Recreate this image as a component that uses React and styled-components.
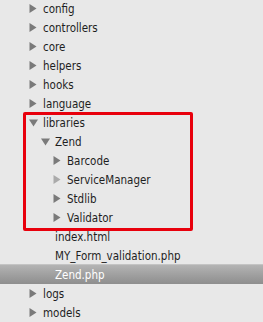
import React from 'react';
import styled, { createGlobalStyle } from 'styled-components';

const Global = createGlobalStyle`
  html, body {
    margin: 0;
    padding: 0;
    background: #e8e8e8;
  }
  body {
    font-family: 'DejaVu Sans Condensed', 'DejaVu Sans', sans-serif;
  }
`;

const Tree = styled.div`
  width: 263px;
  height: 322px;
  overflow: hidden;
  background: #e8e8e8;
`;

const List = styled.div`
  margin-top: -1px;
  display: flex;
  flex-direction: column;
`;

const Row = styled.div`
  height: 19px;
  display: flex;
  align-items: center;
  padding-left: ${(p) => 29 + p.level * 12}px;
  font-size: 11.5px;
  font-stretch: condensed;
  color: ${(p) => (p.selected ? '#fff' : '#1e1e1e')};
  background: ${(p) =>
    p.selected ? 'linear-gradient(#b4b4b4, #a2a2a2 45%, #8e8e8e)' : 'transparent'};
  border-top: 1px solid ${(p) => (p.selected ? '#c4c4c4' : 'transparent')};
  margin-top: -1px;
  white-space: nowrap;
`;

const Arrow = styled.span`
  width: 14px;
  height: 19px;
  flex: none;
  display: flex;
  align-items: center;
  & svg {
    display: block;
  }
`;

const Highlight = styled.div`
  position: absolute;
  left: 23px;
  top: 113px;
  width: 170px;
  height: 119px;
  box-sizing: border-box;
  border: 3px solid #e8000c;
  border-radius: 2px;
  pointer-events: none;
`;

const Wrap = styled.div`
  position: relative;
`;

function Caret({ open, dim }) {
  const fill = dim ? '#aaaaaa' : '#7a7a7a';
  return open ? (
    <svg width="9" height="8" viewBox="0 0 9 8">
      <polygon points="0,0.5 9,0.5 4.5,7.5" fill={fill} />
    </svg>
  ) : (
    <svg width="8" height="9" viewBox="0 0 8 9">
      <polygon points="0.5,0 7.5,4.5 0.5,9" fill={fill} />
    </svg>
  );
}

const items = [
  { name: 'config', level: 0, folder: true },
  { name: 'controllers', level: 0, folder: true },
  { name: 'core', level: 0, folder: true },
  { name: 'helpers', level: 0, folder: true },
  { name: 'hooks', level: 0, folder: true },
  { name: 'language', level: 0, folder: true },
  { name: 'libraries', level: 0, folder: true, open: true },
  { name: 'Zend', level: 1, folder: true, open: true },
  { name: 'Barcode', level: 2, folder: true },
  { name: 'ServiceManager', level: 2, folder: true, dim: true },
  { name: 'Stdlib', level: 2, folder: true },
  { name: 'Validator', level: 2, folder: true },
  { name: 'index.html', level: 1 },
  { name: 'MY_Form_validation.php', level: 1 },
  { name: 'Zend.php', level: 1, selected: true },
  { name: 'logs', level: 0, folder: true },
  { name: 'models', level: 0, folder: true },
];

export default function App() {
  return (
    <Tree>
      <Global />
      <Wrap>
        <List>
          {items.map((it) => (
            <Row key={it.name} level={it.level} selected={it.selected}>
              <Arrow>{it.folder && <Caret open={it.open} dim={it.dim} />}</Arrow>
              {it.name}
            </Row>
          ))}
        </List>
        <Highlight />
      </Wrap>
    </Tree>
  );
}
